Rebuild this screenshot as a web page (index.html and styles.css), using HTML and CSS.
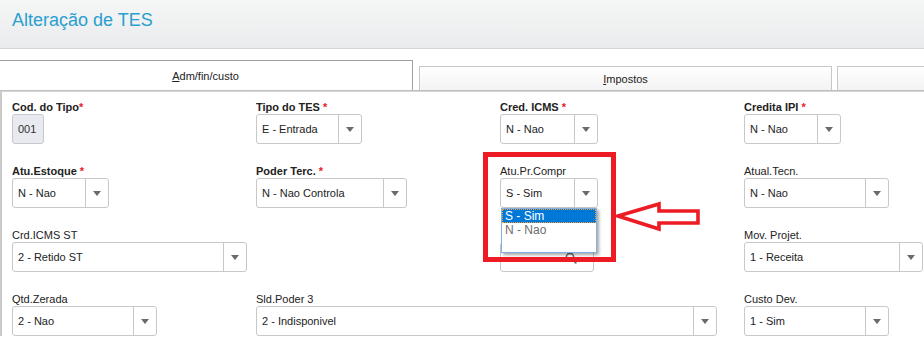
FILE: index.html
```html
<!DOCTYPE html>
<html lang="pt">
<head>
<meta charset="utf-8">
<title>Alteração de TES</title>
<link rel="stylesheet" href="styles.css">
</head>
<body>
<div class="header"><h1 class="title">Alteração de TES</h1></div>

<div class="tabs">
  <div class="tab active"><u>A</u>dm/fin/custo</div>
  <div class="tab"><u>I</u>mpostos</div>
  <div class="tab last"></div>
</div>

<div class="panel">
  <div class="grid">
    <div class="field">
      <label class="lbl req">Cod. do Tipo<span class="ast">*</span></label>
      <div class="input w32">001</div>
    </div>
    <div class="field">
      <label class="lbl req">Tipo do TES <span class="ast">*</span></label>
      <div class="select w106"><span class="value">E - Entrada</span><span class="caret"></span></div>
    </div>
    <div class="field">
      <label class="lbl req">Cred. ICMS <span class="ast">*</span></label>
      <div class="select w98"><span class="value">N - Nao</span><span class="caret"></span></div>
    </div>
    <div class="field">
      <label class="lbl req">Credita IPI <span class="ast">*</span></label>
      <div class="select w97"><span class="value">N - Nao</span><span class="caret"></span></div>
    </div>

    <div class="field">
      <label class="lbl req">Atu.Estoque <span class="ast">*</span></label>
      <div class="select w97"><span class="value">N - Nao</span><span class="caret"></span></div>
    </div>
    <div class="field">
      <label class="lbl req">Poder Terc. <span class="ast">*</span></label>
      <div class="select w151"><span class="value">N - Nao Controla</span><span class="caret"></span></div>
    </div>
    <div class="field open">
      <label class="lbl">Atu.Pr.Compr</label>
      <div class="select w98"><span class="value">S - Sim</span><span class="caret"></span></div>
      <div class="dropdown">
        <div class="opt selected">S - Sim</div>
        <div class="opt">N - Nao</div>
      </div>
    </div>
    <div class="field">
      <label class="lbl">Atual.Tecn.</label>
      <div class="select w145"><span class="value">N - Nao</span><span class="caret"></span></div>
    </div>

    <div class="field">
      <label class="lbl">Crd.ICMS ST</label>
      <div class="select w235"><span class="value">2 - Retido ST</span><span class="caret"></span></div>
    </div>
    <div class="field"></div>
    <div class="field">
      <label class="lbl"></label>
      <div class="select w94"><span class="value"></span><span class="lookup">
        <svg width="12" height="12" viewBox="0 0 12 12"><circle cx="5" cy="5" r="3.6" fill="none" stroke="#6b6b6b" stroke-width="1.6"/><path d="M7.6 7.6 L10.8 10.8" stroke="#6b6b6b" stroke-width="1.8" stroke-linecap="round"/></svg>
      </span></div>
    </div>
    <div class="field">
      <label class="lbl">Mov. Projet.</label>
      <div class="select w179"><span class="value">1 - Receita</span><span class="caret"></span></div>
    </div>

    <div class="field">
      <label class="lbl">Qtd.Zerada</label>
      <div class="select w145"><span class="value">2 - Nao</span><span class="caret"></span></div>
    </div>
    <div class="field span2">
      <label class="lbl">Sld.Poder 3</label>
      <div class="select w461"><span class="value">2 - Indisponivel</span><span class="caret"></span></div>
    </div>
    <div class="field">
      <label class="lbl">Custo Dev.</label>
      <div class="select w145"><span class="value">1 - Sim</span><span class="caret"></span></div>
    </div>
  </div>
</div>

<div class="mark-box"></div>
<svg class="mark-arrow" width="100" height="40" viewBox="0 0 100 40">
  <polygon points="8,18 49,6 49,13 88,13 88,25 49,25 49,31" fill="none" stroke="#ed1c24" stroke-width="3.6" stroke-linejoin="miter"/>
</svg>
</body>
</html>
```

FILE: styles.css
```css
html, body {
  margin: 0;
  padding: 0;
  overflow: hidden;
  background: #fff;
}
body {
  position: relative;
  font-family: "Liberation Sans", Arial, sans-serif;
  color: #222;
  width: 924px;
  height: 337px;
}

.header {
  height: 48px;
  background: linear-gradient(#f5f6f6, #eaebec);
  border-bottom: 1px solid #d6d6d6;
}
.title {
  margin: 0;
  padding: 10px 0 0 12px;
  font-size: 18px;
  line-height: 20px;
  font-weight: normal;
  color: #2a9fd0;
}

.tabs {
  display: flex;
  align-items: flex-end;
  margin-top: 11px;
  height: 30px;
  border-bottom: 1px solid #bfbfbf;
  overflow: hidden;
}
.tab {
  box-sizing: border-box;
  flex: none;
  width: 413px;
  height: 24px;
  margin-left: 6px;
  border: 1px solid #c8c8c8;
  border-bottom: none;
  background: linear-gradient(#ffffff, #f3f3f3);
  font-size: 11px;
  line-height: 25px;
  text-align: center;
  color: #222;
}
.tab.active {
  width: 415px;
  height: 30px;
  margin-left: -2px;
  border-color: #a0a0a0;
  background: #fff;
  line-height: 30px;
}
.tab.last {
  margin-left: 5px;
  flex: 1 0 auto;
  width: auto;
  border-right: none;
}
.tab u {
  text-decoration-thickness: 1px;
  text-underline-offset: 1px;
}

.panel {
  border-top: 1px solid #d6d6d6;
  border-left: 2px solid #c9c9c9;
  padding: 8px 0 0 10px;
}
.grid {
  display: grid;
  grid-template-columns: repeat(3, 244px) 1fr;
  row-gap: 20px;
}
.field {
  position: relative;
}
.field.span2 {
  grid-column: span 2;
}
.lbl {
  display: block;
  height: 14px;
  font-size: 11px;
  line-height: 14px;
  color: #222;
  white-space: nowrap;
}
.lbl.req {
  font-weight: bold;
}
.ast {
  color: #e8202a;
}

.input {
  box-sizing: border-box;
  height: 30px;
  border: 1px solid #c6c9d0;
  border-radius: 3px;
  background: #e8eaef;
  padding-left: 5px;
  font-size: 11px;
  line-height: 28px;
  color: #333;
}

.select {
  box-sizing: border-box;
  display: flex;
  height: 30px;
  border: 1px solid #c8c8c8;
  border-radius: 3px;
  background: #fff;
}
.value {
  flex: 1;
  min-width: 0;
  padding-left: 5px;
  font-size: 11px;
  line-height: 28px;
  color: #222;
  white-space: nowrap;
}
.caret {
  flex: none;
  width: 22px;
  border-left: 1px solid #c8c8c8;
  display: flex;
  align-items: center;
  justify-content: center;
}
.caret::after {
  content: "";
  border-left: 4px solid transparent;
  border-right: 4px solid transparent;
  border-top: 5px solid #6b6b6b;
}
.lookup {
  flex: none;
  width: 28px;
  display: flex;
  align-items: center;
  justify-content: flex-start;
  padding-top: 2px;
  box-sizing: border-box;
}

.w32 { width: 32px; }
.w94 { width: 94px; }
.w97 { width: 97px; }
.w98 { width: 98px; }
.w106 { width: 106px; }
.w145 { width: 145px; }
.w151 { width: 151px; }
.w179 { width: 179px; }
.w235 { width: 235px; }
.w461 { width: 461px; }

.field.open {
  z-index: 5;
}
.dropdown {
  position: absolute;
  top: 44px;
  left: 1px;
  box-sizing: border-box;
  width: 96px;
  height: 45px;
  border: 1px solid #86aee6;
  background: #fff;
  box-shadow: 2px 2px 3px rgba(0, 0, 0, 0.35);
}
.opt {
  height: 14px;
  padding-left: 3px;
  font-size: 12px;
  line-height: 14px;
  color: #6d6d6d;
}
.opt.selected {
  background: #0078d7;
  color: #fff;
  outline: 1px dotted #f0a030;
  outline-offset: -1px;
}

.mark-box {
  position: absolute;
  left: 483px;
  top: 152px;
  width: 133px;
  height: 110px;
  box-sizing: border-box;
  border: 5px solid #ed1c24;
  z-index: 10;
}
.mark-arrow {
  position: absolute;
  left: 610px;
  top: 198px;
  z-index: 10;
}
```
